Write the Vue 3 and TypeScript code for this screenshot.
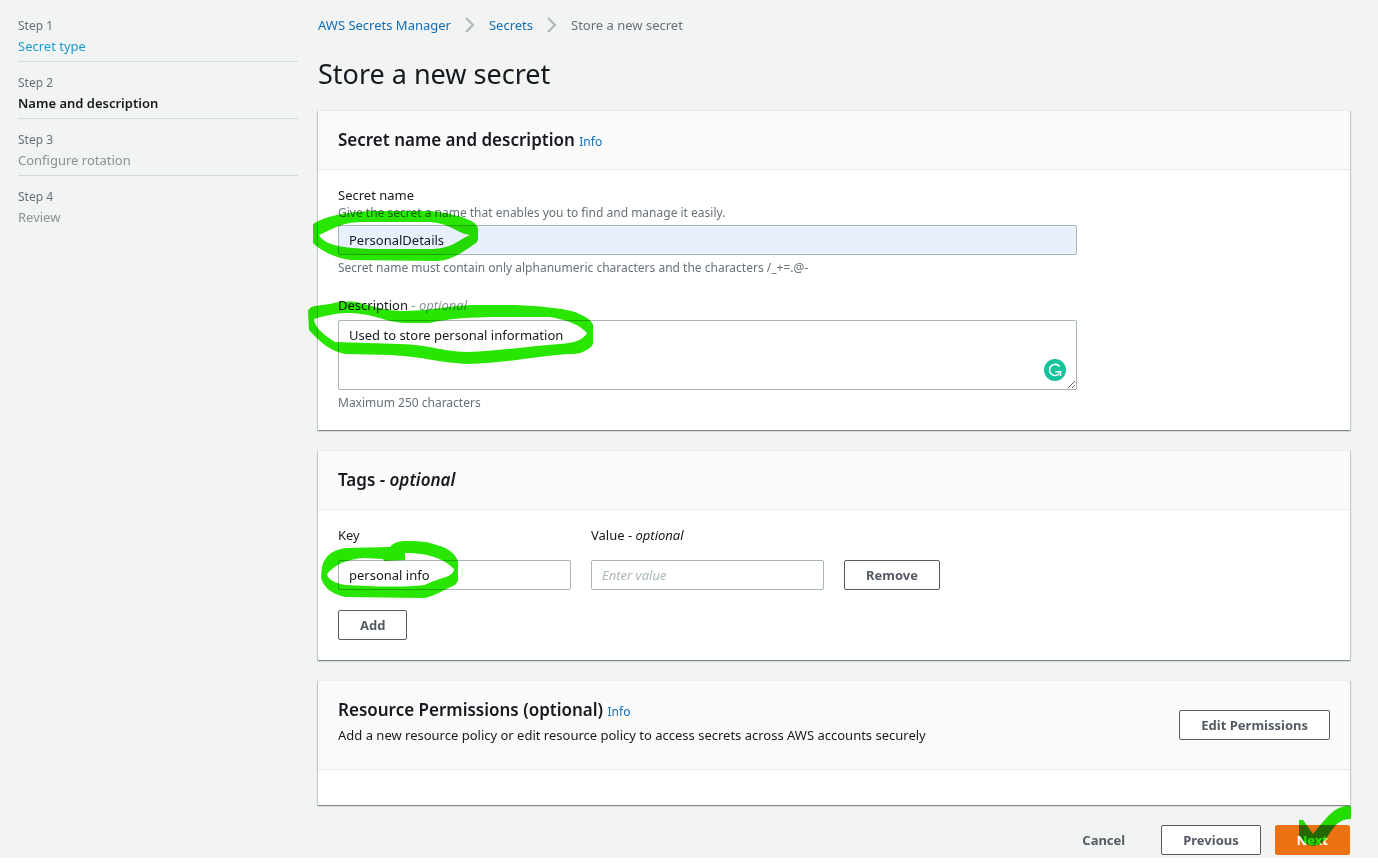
<script setup lang="ts">
import { ref } from 'vue'

interface Step {
  label: string
  title: string
  state: 'done' | 'current' | 'upcoming'
}

const steps: Step[] = [
  { label: 'Step 1', title: 'Secret type', state: 'done' },
  { label: 'Step 2', title: 'Name and description', state: 'current' },
  { label: 'Step 3', title: 'Configure rotation', state: 'upcoming' },
  { label: 'Step 4', title: 'Review', state: 'upcoming' },
]

const secretName = ref('PersonalDetails')
const description = ref('Used to store personal information')
const tagKey = ref('personal info')
const tagValue = ref('')
</script>

<template>
  <div class="page">
    <nav class="steps" aria-label="Wizard steps">
      <ol>
        <li v-for="step in steps" :key="step.label" class="step">
          <span class="step-label">{{ step.label }}</span>
          <a v-if="step.state === 'done'" href="#" class="step-title done">{{ step.title }}</a>
          <span v-else class="step-title" :class="step.state">{{ step.title }}</span>
        </li>
      </ol>
    </nav>

    <main class="main">
      <nav class="breadcrumb" aria-label="Breadcrumb">
        <a href="#">AWS Secrets Manager</a>
        <svg class="chevron" viewBox="0 0 10 16" aria-hidden="true"><path d="M1 1l7 7-7 7" /></svg>
        <a href="#">Secrets</a>
        <svg class="chevron" viewBox="0 0 10 16" aria-hidden="true"><path d="M1 1l7 7-7 7" /></svg>
        <span>Store a new secret</span>
      </nav>

      <h1>Store a new secret</h1>

      <form class="panels" @submit.prevent>
        <section class="panel">
          <header class="panel-head">
            <h2>Secret name and description <a href="#" class="info">Info</a></h2>
          </header>
          <div class="panel-body form-grid">
            <div class="field wide">
              <label for="secret-name">Secret name</label>
              <p class="hint">Give the secret a name that enables you to find and manage it easily.</p>
              <div class="control">
                <input id="secret-name" v-model="secretName" type="text" class="filled" />
                <svg class="mark mark-name" viewBox="308 205 175 60" aria-hidden="true">
                  <path
                    fill-rule="evenodd"
                    d="M313 224C325 216 345 212 372 211L430 211C450 213 465 217 473 222Q478 225 478 230L478 240Q477 243 473 245C463 252 452 260 438 261L350 260C335 258 320 250 313 243ZM319 235C335 228 342 222 365 222L430 222C452 224 456 233 470 235C458 240 452 249 430 249L370 249C345 248 325 246 319 235Z"
                  />
                </svg>
              </div>
              <p class="hint below">Secret name must contain only alphanumeric characters and the characters /_+=.@-</p>
            </div>
            <div class="field wide">
              <label for="description">Description <span class="muted">- <i>optional</i></span></label>
              <div class="control">
                <textarea id="description" v-model="description"></textarea>
                <svg class="checker" viewBox="0 0 22 22" aria-hidden="true">
                  <circle cx="11" cy="11" r="11" fill="#15c39a" />
                  <path d="M15.6 7.6A5.6 5.6 0 1 0 15.2 14.8" fill="none" stroke="#fff" stroke-width="1.6" />
                  <path d="M11.4 12.8h5.1v4.2" fill="none" stroke="#fff" stroke-width="1.6" />
                </svg>
                <svg class="mark mark-description" viewBox="303 295 295 75" aria-hidden="true">
                  <path
                    fill-rule="evenodd"
                    d="M308 311Q309 307 315 306L330 304C343 301 352 301 360 303C375 307 385 310 400 311C430 311 440 307 470 305L515 305C540 306 560 308 575 312Q592 319 593 325L593 344C590 350 580 354 573 354C540 355 510 363 467 364C440 363 420 356 390 355L345 354C330 351 320 342 309 330ZM314 319C330 314 340 313 350 313C375 314 385 322 405 323L430 323C445 319 470 317 500 317L550 317C568 320 580 325 587 333C583 340 575 343 560 344C530 346 500 351 467 352C440 351 430 345 400 344L335 342C325 336 314 327 314 319Z"
                  />
                </svg>
              </div>
              <p class="hint below">Maximum 250 characters</p>
            </div>
          </div>
        </section>

        <section class="panel">
          <header class="panel-head">
            <h2>Tags - <i>optional</i></h2>
          </header>
          <div class="panel-body form-grid">
            <div class="field tag">
              <label for="tag-key">Key</label>
              <div class="control">
                <input id="tag-key" v-model="tagKey" type="text" />
                <svg class="mark mark-key" viewBox="316 536 147 67" aria-hidden="true">
                  <path
                    fill-rule="evenodd"
                    d="M322 567C325 555 333 550 345 548L390 547C395 541 402 541 410 541C430 541 435 545 440 546C450 549 457 556 458 562L458 580Q457 584 453 586C443 590 437 595 425 598L345 597C330 594 322 585 321 577ZM327 574C335 565 345 559 365 558L383 559L384 561L405 560L405 553C420 553 440 555 454 569C453 578 440 577 425 585C400 588 365 586 345 585C335 583 328 580 327 574Z"
                  />
                </svg>
              </div>
            </div>
            <div class="field tag">
              <label for="tag-value">Value - <i>optional</i></label>
              <div class="control">
                <input id="tag-value" v-model="tagValue" type="text" placeholder="Enter value" />
              </div>
            </div>
            <button type="button" class="btn remove">Remove</button>
            <button type="button" class="btn add">Add</button>
          </div>
        </section>

        <section class="panel">
          <header class="panel-head">
            <div>
              <h2>Resource Permissions (optional) <a href="#" class="info">Info</a></h2>
              <p class="panel-text">Add a new resource policy or edit resource policy to access secrets across AWS accounts securely</p>
            </div>
            <button type="button" class="btn">Edit Permissions</button>
          </header>
          <div class="panel-empty"></div>
        </section>

        <footer class="actions">
          <button type="button" class="btn link">Cancel</button>
          <button type="button" class="btn">Previous</button>
          <div class="control">
            <button type="submit" class="btn primary">Next</button>
            <svg class="mark mark-next" viewBox="1291 801 60 54" aria-hidden="true">
              <path d="M1299 820L1303 820L1313 834C1325 820 1332 808 1346 806L1351 806L1351 819C1335 819 1332 832 1325 840C1318 848 1308 847 1304 842L1299 835Z" />
            </svg>
          </div>
        </footer>
      </form>
    </main>
  </div>
</template>

<style>
body {
  margin: 0;
  background: #fff;
}
</style>

<style scoped>
.page {
  display: flex;
  gap: 20px;
  padding: 0 28px 3px 18px;
  background: #f2f3f3;
  color: #16191f;
  font-family: 'Noto Sans', 'Open Sans', sans-serif;
  font-size: 13px;
  line-height: 20px;
}

.page * {
  box-sizing: border-box;
}

h1,
h2,
p,
ol {
  margin: 0;
  padding: 0;
  font-weight: 400;
}

a {
  color: #146eb4;
  text-decoration: none;
}

.steps {
  flex: 0 0 280px;
  padding-top: 18px;
}

.steps ol {
  display: flex;
  flex-direction: column;
  gap: 13px;
  list-style: none;
}

.step {
  display: flex;
  flex-direction: column;
  gap: 2px;
  padding-bottom: 5px;
  border-bottom: 1px solid #d5dbdb;
}

.step:last-child {
  border-bottom: 0;
}

.step-label {
  color: #687078;
  font-size: 12px;
  line-height: 16px;
}

.step-title {
  color: #879596;
}

.step-title.done {
  color: #1a9dcc;
}

.step-title.current {
  color: #16191f;
  font-weight: 600;
}

.main {
  flex: 1;
  min-width: 0;
}

.breadcrumb {
  display: flex;
  align-items: center;
  gap: 14px;
  padding-top: 15px;
  color: #687078;
}

.chevron {
  width: 10px;
  height: 16px;
  fill: none;
  stroke: #aab7b8;
  stroke-width: 2;
}

h1 {
  padding: 20px 0 17px;
  font-size: 27px;
  line-height: 38px;
}

.panels {
  display: flex;
  flex-direction: column;
  gap: 20px;
}

.panel {
  border-top: 1px solid #eaeded;
  background: #fff;
  box-shadow:
    0 1px 1px 0 rgba(0, 28, 36, 0.3),
    1px 1px 1px 0 rgba(0, 28, 36, 0.15),
    -1px 1px 1px 0 rgba(0, 28, 36, 0.15);
}

.panel-head {
  display: flex;
  align-items: center;
  justify-content: space-between;
  padding: 19px 20px;
  border-bottom: 1px solid #eaeded;
  background: #fafafa;
}

h2 {
  font-size: 17px;
  font-weight: 600;
  line-height: 20px;
}

.info {
  font-size: 12px;
  font-weight: 400;
  line-height: 12px;
}

.panel-text {
  padding: 5px 0;
}

.panel-body {
  padding: 15px 20px 20px;
}

.panel-empty {
  height: 35px;
}

.form-grid {
  display: grid;
  grid-template-columns: repeat(4, 1fr);
  gap: 20px;
}

.wide {
  grid-column: span 3;
}

label {
  display: block;
}

.muted {
  color: #879596;
}

.hint {
  color: #687078;
  font-size: 12px;
  line-height: 15px;
}

.hint.below {
  padding-top: 5px;
}

.control {
  position: relative;
}

.field .control {
  margin-top: 5px;
}

.tag .control {
  margin-top: 15px;
}

input,
textarea {
  display: block;
  width: 100%;
  height: 30px;
  padding: 4px 10px;
  border: 1px solid #aab7b8;
  border-radius: 2px;
  background: #fff;
  color: #16191f;
  font: inherit;
}

textarea {
  height: 70px;
  resize: vertical;
}

input.filled {
  background: #e8f0fe;
}

input::placeholder {
  color: #aab7b8;
  font-style: italic;
}

.btn {
  height: 30px;
  padding: 4px 21px;
  border: 1px solid #545b64;
  border-radius: 2px;
  background: #fff;
  color: #545b64;
  font: inherit;
  font-weight: 700;
}

.btn.remove {
  align-self: end;
  justify-self: start;
}

.btn.add {
  grid-column: 1;
  justify-self: start;
}

.btn.link {
  border-color: transparent;
  background: transparent;
}

.btn.primary {
  border-color: #ec7211;
  background: #ec7211;
  color: #fff;
}

.actions {
  display: flex;
  justify-content: flex-end;
  gap: 14px;
}

.checker {
  position: absolute;
  right: 11px;
  bottom: 9px;
  width: 22px;
  height: 22px;
}

/* Highlighter strokes laid over the fields */
.mark {
  position: absolute;
  fill: #28e600;
  mix-blend-mode: multiply;
  pointer-events: none;
}

.mark-name {
  top: -20px;
  left: -30px;
  width: 175px;
  height: 60px;
}

.mark-description {
  top: -25px;
  left: -35px;
  width: 295px;
  height: 75px;
}

.mark-key {
  top: -24px;
  left: -22px;
  width: 147px;
  height: 67px;
}

.mark-next {
  right: -1px;
  bottom: 0;
  width: 60px;
  height: 54px;
}
</style>
